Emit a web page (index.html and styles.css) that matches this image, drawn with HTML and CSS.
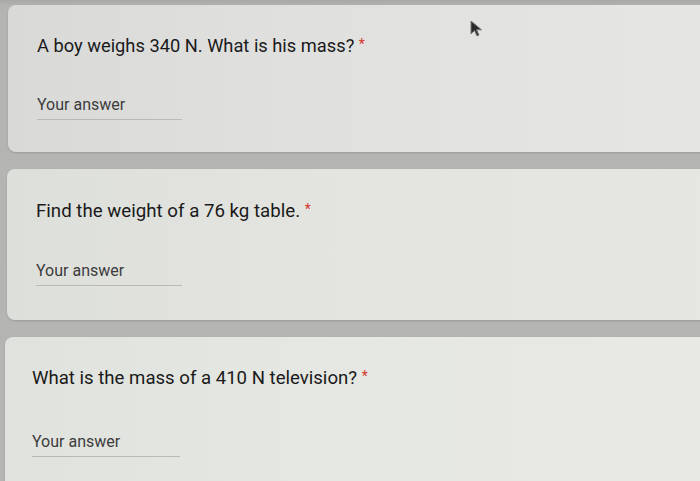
FILE: index.html
```html
<!DOCTYPE html>
<html>
<head>
<meta charset="utf-8">
<link rel="stylesheet" href="styles.css">
</head>
<body>
<div class="page">
  <div class="card card1">
    <div class="q">A boy weighs 340 N. What is his mass? <span class="req">*</span></div>
    <div class="answer">Your answer</div>
  </div>
  <div class="card card2">
    <div class="q">Find the weight of a 76 kg table. <span class="req">*</span></div>
    <div class="answer">Your answer</div>
  </div>
  <div class="card card3">
    <div class="q">What is the mass of a 410 N television? <span class="req">*</span></div>
    <div class="answer">Your answer</div>
  </div>
  <svg class="cursor" width="14" height="18" viewBox="0 0 14 18">
    <path d="M1 1 L1 14 L4.5 10.5 L7 16 L9 15 L6.5 9.8 L11.5 9.8 Z" fill="#2a2a2a" stroke="#777" stroke-width="1"/>
  </svg>
</div>
</body>
</html>
```
FILE: styles.css
```css
html, body {
  margin: 0;
  padding: 0;
}
body {
  width: 700px;
  height: 481px;
  overflow: hidden;
  background: linear-gradient(180deg, #a8a8a6 0px, #b4b4b2 6px, #b5b5b3 100%);
  font-family: Roboto, "Liberation Sans", sans-serif;
}
.page {
  position: relative;
  display: flex;
  flex-direction: column;
  padding-top: 5px;
  gap: 17px;
}
.card {
  width: 720px;
  border-radius: 8px;
  box-sizing: border-box;
  display: flex;
  flex-direction: column;
  flex-shrink: 0;
  background: linear-gradient(90deg, #d9dad8 0%, #e0e1df 40%, #e6e6e4 100%);
  box-shadow: 0 1px 2px rgba(0,0,0,0.15);
}
.card1 {
  margin-left: 8px;
  height: 147px;
  padding: 27px 0 0 29px;
}
.card2 {
  margin-left: 7px;
  height: 151px;
  padding: 28px 0 0 29px;
  background: linear-gradient(90deg, #dddfdb 0%, #e3e4e0 40%, #e6e7e3 100%);
}
.card3 {
  margin-left: 5px;
  height: 160px;
  padding: 27px 0 0 27px;
  background: linear-gradient(90deg, #e0e2dd 0%, #e5e7e2 40%, #e8e9e5 100%);
}
.q {
  font-size: 18.3px;
  color: #1a1a1a;
  line-height: 24px;
  white-space: nowrap;
}
.card2 .q { font-size: 18.7px; }
.card3 .q { font-size: 18.6px; }
.req {
  color: #d5352b;
  font-size: 14px;
  vertical-align: 3px;
}
.answer {
  margin-top: 38px;
  width: 145px;
  font-size: 16px;
  color: #3c3c3c;
  padding-bottom: 5px;
  border-bottom: 1px solid #b9bab8;
  line-height: 18px;
}
.card2 .answer { margin-top: 39px; width: 146px; }
.card3 .answer { margin-top: 43px; width: 148px; }
.cursor {
  position: absolute;
  left: 470px;
  top: 20px;
}
```
